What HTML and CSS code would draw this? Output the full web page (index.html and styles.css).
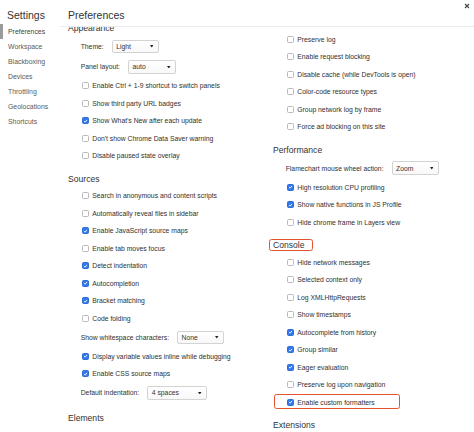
FILE: index.html
```html
<!DOCTYPE html>
<html lang="en">
<head>
<meta charset="utf-8">
<title>Settings</title>
<link rel="stylesheet" href="styles.css">
</head>
<body>
<div class="settings">
  <aside class="sidebar">
    <div class="sidebar-title">Settings</div>
    <nav class="nav">
      <div class="nav-item selected">Preferences</div>
      <div class="nav-item">Workspace</div>
      <div class="nav-item">Blackboxing</div>
      <div class="nav-item">Devices</div>
      <div class="nav-item">Throttling</div>
      <div class="nav-item">Geolocations</div>
      <div class="nav-item">Shortcuts</div>
    </nav>
  </aside>
  <main class="main">
    <header class="header">
      <div class="title">Preferences</div>
      <button class="close" aria-label="Close"><svg viewBox="0 0 6 6" width="6" height="6"><path d="M1 1L5 5M5 1L1 5" stroke="#444" stroke-width="1.1"/></svg></button>
    </header>
    <div class="scroll">
      <div class="content">
        <div class="column col-left">
          <section>
            <div class="section-title">Appearance</div>
            <div class="row select-row"><span class="label">Theme:</span><span class="select w47">Light<svg class="arrow" viewBox="0 0 4 3"><path d="M0 0H4L2 3Z"/></svg></span></div>
            <div class="row select-row"><span class="label">Panel layout:</span><span class="select w48">auto<svg class="arrow" viewBox="0 0 4 3"><path d="M0 0H4L2 3Z"/></svg></span></div>
            <div class="row check-row"><span class="box"></span>Enable Ctrl + 1-9 shortcut to switch panels</div>
            <div class="row check-row"><span class="box"></span>Show third party URL badges</div>
            <div class="row check-row"><span class="box checked"><svg viewBox="0 0 8 8"><path d="M1.7 4.2L3.4 5.8L6.3 2.3"/></svg></span>Show What's New after each update</div>
            <div class="row check-row"><span class="box"></span>Don't show Chrome Data Saver warning</div>
            <div class="row check-row"><span class="box"></span>Disable paused state overlay</div>
          </section>
          <section>
            <div class="section-title">Sources</div>
            <div class="row check-row"><span class="box"></span>Search in anonymous and content scripts</div>
            <div class="row check-row"><span class="box"></span>Automatically reveal files in sidebar</div>
            <div class="row check-row"><span class="box checked"><svg viewBox="0 0 8 8"><path d="M1.7 4.2L3.4 5.8L6.3 2.3"/></svg></span>Enable JavaScript source maps</div>
            <div class="row check-row"><span class="box"></span>Enable tab moves focus</div>
            <div class="row check-row"><span class="box checked"><svg viewBox="0 0 8 8"><path d="M1.7 4.2L3.4 5.8L6.3 2.3"/></svg></span>Detect indentation</div>
            <div class="row check-row"><span class="box checked"><svg viewBox="0 0 8 8"><path d="M1.7 4.2L3.4 5.8L6.3 2.3"/></svg></span>Autocompletion</div>
            <div class="row check-row"><span class="box checked"><svg viewBox="0 0 8 8"><path d="M1.7 4.2L3.4 5.8L6.3 2.3"/></svg></span>Bracket matching</div>
            <div class="row check-row"><span class="box"></span>Code folding</div>
            <div class="row select-row"><span class="label">Show whitespace characters:</span><span class="select w47">None<svg class="arrow" viewBox="0 0 4 3"><path d="M0 0H4L2 3Z"/></svg></span></div>
            <div class="row check-row"><span class="box checked"><svg viewBox="0 0 8 8"><path d="M1.7 4.2L3.4 5.8L6.3 2.3"/></svg></span>Display variable values inline while debugging</div>
            <div class="row check-row"><span class="box checked"><svg viewBox="0 0 8 8"><path d="M1.7 4.2L3.4 5.8L6.3 2.3"/></svg></span>Enable CSS source maps</div>
            <div class="row select-row"><span class="label">Default indentation:</span><span class="select w60">4 spaces<svg class="arrow" viewBox="0 0 4 3"><path d="M0 0H4L2 3Z"/></svg></span></div>
          </section>
          <section>
            <div class="section-title">Elements</div>
          </section>
        </div>
        <div class="column col-right">
          <section>
            <div class="row check-row"><span class="box"></span>Preserve log</div>
            <div class="row check-row"><span class="box"></span>Enable request blocking</div>
            <div class="row check-row"><span class="box"></span>Disable cache (while DevTools is open)</div>
            <div class="row check-row"><span class="box"></span>Color-code resource types</div>
            <div class="row check-row"><span class="box"></span>Group network log by frame</div>
            <div class="row check-row"><span class="box"></span>Force ad blocking on this site</div>
          </section>
          <section>
            <div class="section-title">Performance</div>
            <div class="row select-row"><span class="label">Flamechart mouse wheel action:</span><span class="select w47">Zoom<svg class="arrow" viewBox="0 0 4 3"><path d="M0 0H4L2 3Z"/></svg></span></div>
            <div class="row check-row"><span class="box checked"><svg viewBox="0 0 8 8"><path d="M1.7 4.2L3.4 5.8L6.3 2.3"/></svg></span>High resolution CPU profiling</div>
            <div class="row check-row"><span class="box checked"><svg viewBox="0 0 8 8"><path d="M1.7 4.2L3.4 5.8L6.3 2.3"/></svg></span>Show native functions in JS Profile</div>
            <div class="row check-row"><span class="box"></span>Hide chrome frame in Layers view</div>
          </section>
          <section>
            <div class="section-title"><span class="mark-title">Console</span></div>
            <div class="row check-row"><span class="box"></span>Hide network messages</div>
            <div class="row check-row"><span class="box"></span>Selected context only</div>
            <div class="row check-row"><span class="box"></span>Log XMLHttpRequests</div>
            <div class="row check-row"><span class="box"></span>Show timestamps</div>
            <div class="row check-row"><span class="box checked"><svg viewBox="0 0 8 8"><path d="M1.7 4.2L3.4 5.8L6.3 2.3"/></svg></span>Autocomplete from history</div>
            <div class="row check-row"><span class="box checked"><svg viewBox="0 0 8 8"><path d="M1.7 4.2L3.4 5.8L6.3 2.3"/></svg></span>Group similar</div>
            <div class="row check-row"><span class="box checked"><svg viewBox="0 0 8 8"><path d="M1.7 4.2L3.4 5.8L6.3 2.3"/></svg></span>Eager evaluation</div>
            <div class="row check-row"><span class="box"></span>Preserve log upon navigation</div>
            <div class="row check-row marked"><span class="box checked"><svg viewBox="0 0 8 8"><path d="M1.7 4.2L3.4 5.8L6.3 2.3"/></svg></span>Enable custom formatters</div>
          </section>
          <section>
            <div class="section-title">Extensions</div>
          </section>
        </div>
      </div>
    </div>
  </main>
</div>
</body>
</html>
```

FILE: styles.css
```css
* {
  box-sizing: border-box;
  margin: 0;
  padding: 0;
}

html,
body {
  width: 474px;
  height: 432px;
  overflow: hidden;
  background: #fff;
}

body {
  font-family: "Liberation Sans", Arial, sans-serif;
  color: #303030;
}

.settings {
  display: flex;
  height: 432px;
}

/* Sidebar */
.sidebar {
  width: 60px;
  flex: none;
}

.sidebar-title {
  height: 24px;
  padding: 9px 0 0 7px;
  font-size: 10.5px;
  line-height: 12px;
  color: #333;
}

.nav-item {
  height: 15px;
  line-height: 15px;
  padding-left: 8px;
  font-size: 6.9px;
  color: #5a5a5a;
  white-space: nowrap;
}

.nav-item.selected {
  border-left: 3px solid #9b9b9b;
  padding-left: 5px;
  color: #444;
}

/* Main */
.main {
  flex: 1;
  min-width: 0;
  display: flex;
  flex-direction: column;
}

.header {
  height: 27px;
  flex: none;
  display: flex;
  align-items: flex-start;
  padding-left: 8px;
  border-bottom: 1px solid #ebebeb;
}

.title {
  flex: 1;
  padding-top: 9px;
  font-size: 10.5px;
  line-height: 12px;
  color: #333;
}

.close {
  border: 0;
  background: none;
  display: flex;
  margin: 3px 4px 0 0;
  width: 6px;
  height: 6px;
}

.close svg {
  display: block;
}

.scroll {
  flex: 1;
  overflow: hidden;
}

.content {
  display: flex;
  margin-top: -19.25px;
  padding-left: 8px;
}

.column {
  width: 205px;
  flex: none;
}

.col-left {
  padding-top: 5.75px;
}

.col-right {
  padding-top: 22.5px;
}

.section-title {
  margin: 8.5px 0 2px;
  font-size: 8.6px;
  line-height: 12px;
  color: #333;
}

.mark-title {
  position: relative;
}

.mark-title::after {
  content: "";
  position: absolute;
  left: -4px;
  right: -8.5px;
  top: -1.5px;
  bottom: -1px;
  border: 1.5px solid #e5532c;
  border-radius: 2.5px;
}

.row {
  display: flex;
  align-items: center;
  font-size: 6.8px;
  white-space: nowrap;
}

.check-row {
  height: 17.5px;
  padding-left: 14px;
  gap: 3.3px;
}

.select-row {
  height: 20.5px;
  padding-left: 12.7px;
  gap: 8px;
}

.marked {
  position: relative;
}

.marked::after {
  content: "";
  position: absolute;
  left: 1.3px;
  width: 123.5px;
  top: 0.75px;
  bottom: 1.45px;
  border: 1.5px solid #e5532c;
  border-radius: 2.5px;
}

.box {
  width: 7px;
  height: 7px;
  flex: none;
  border: 0.8px solid #b9b9b9;
  border-radius: 1.5px;
  background: #fff;
  display: flex;
  align-items: center;
  justify-content: center;
}

.box.checked {
  background: #3479ef;
  border-color: #2e6cd6;
}

.box svg {
  width: 6px;
  height: 6px;
  fill: none;
  stroke: #fff;
  stroke-width: 1.4;
}

.select {
  position: relative;
  height: 13.5px;
  flex: none;
  display: flex;
  align-items: center;
  padding-left: 3.5px;
  border: 1px solid #d3d3d3;
  border-radius: 2px;
  background: linear-gradient(#fff, #f8f8f8);
  color: #333;
}

.w47 {
  width: 47px;
}

.w48 {
  width: 48px;
}

.w60 {
  width: 60px;
}

.arrow {
  position: absolute;
  right: 4.5px;
  top: 50%;
  width: 3.5px;
  height: 2.6px;
  margin-top: -1.1px;
  fill: #222;
}
```
